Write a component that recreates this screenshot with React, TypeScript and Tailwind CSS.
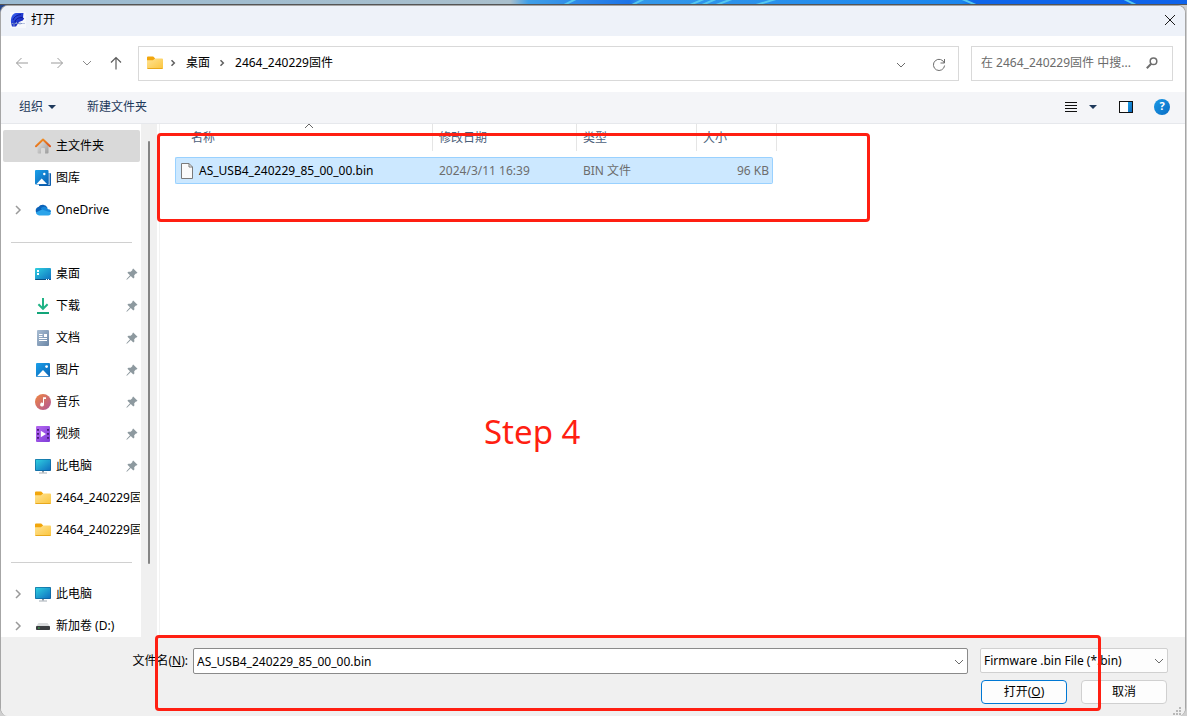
import { useState, type ReactNode } from "react";

type IconName =
  | "home"
  | "gallery"
  | "onedrive"
  | "desktop"
  | "download"
  | "document"
  | "picture"
  | "music"
  | "video"
  | "computer"
  | "folder"
  | "drive";

interface NavItem {
  label: string;
  icon: IconName;
  pinned?: boolean;
  expandable?: boolean;
  selected?: boolean;
}

const navGroups: NavItem[][] = [
  [
    { label: "主文件夹", icon: "home", selected: true },
    { label: "图库", icon: "gallery" },
    { label: "OneDrive", icon: "onedrive", expandable: true },
  ],
  [
    { label: "桌面", icon: "desktop", pinned: true },
    { label: "下载", icon: "download", pinned: true },
    { label: "文档", icon: "document", pinned: true },
    { label: "图片", icon: "picture", pinned: true },
    { label: "音乐", icon: "music", pinned: true },
    { label: "视频", icon: "video", pinned: true },
    { label: "此电脑", icon: "computer", pinned: true },
    { label: "2464_240229固件", icon: "folder" },
    { label: "2464_240229固件", icon: "folder" },
  ],
  [
    { label: "此电脑", icon: "computer", expandable: true },
    { label: "新加卷 (D:)", icon: "drive", expandable: true },
  ],
];

const iconShapes: Record<IconName, ReactNode> = {
  home: (
    <>
      <path d="M2.5 7 8 2.500 13.500 7v7.500a1 1 0 0 1-1 1H10V11a1 1 0 0 0-1-1H7a1 1 0 0 0-1 1v4.500H3.500a1 1 0 0 1-1-1z" fill="url(#gHouse)" />
      <path d="M1 8.200 8 1.600l7 6.600" fill="none" stroke="url(#gRoof)" strokeWidth="2" strokeLinecap="round" strokeLinejoin="round" />
    </>
  ),
  gallery: (
    <>
      <path d="M3 3h12a1 1 0 0 1 1 1v11a1 1 0 0 1-1 1H4z" fill="#0f5fae" />
      <path d="M14 1.5V15" stroke="#fff" strokeWidth="1" />
      <rect x="0" y="0" width="13.5" height="14.5" rx="1" fill="url(#gBlue)" />
      <path d="M1.5 14 6.700 8.500 12 14z" fill="#fff" />
      <circle cx="9.300" cy="4" r="1.200" fill="#fff" />
    </>
  ),
  onedrive: (
    <>
      <path d="M4 12.5a3.8 3.8 0 0 1-.6-7.4A5.2 5.2 0 0 1 12.6 6L8 10z" fill="#0b62b8" />
      <path d="M5.8 6.2A4.3 4.3 0 0 1 13 7.2a2.8 2.8 0 0 1 3 2.8l-6 1.6z" fill="#1686d9" />
      <path d="M.8 10.6 7 7.4l8.9 3a2.8 2.8 0 0 1-2.7 3H4a4 4 0 0 1-3.2-2.8z" fill="#2ba4ea" />
    </>
  ),
  desktop: (
    <>
      <rect x="0" y="2" width="16" height="12" rx="1" fill="url(#gTeal)" />
      <path d="M0 13h16a1 1 0 0 1-1 1H1a1 1 0 0 1-1-1z" fill="#0b4f84" />
      <path d="M2 4h2v2H2zM2 7h2v2H2z" fill="#fff" />
      <path d="M11 13.500h1M13 13.500h1" stroke="#fff" strokeWidth="1" />
    </>
  ),
  download: (
    <>
      <path d="M8 0v10.500M3.400 6.300 8 10.800l4.600-4.500" fill="none" stroke="#1fb385" strokeWidth="2" />
      <path d="M2 15h12" stroke="#12a579" strokeWidth="2" />
    </>
  ),
  document: (
    <>
      <rect x="2" y="0" width="12" height="16" rx="1" fill="url(#gDoc)" />
      <path d="M4 4.5h3.5M4 6.5h3.5M4 8.500h8M4 10.500h8" stroke="#fff" strokeWidth="1" />
      <path d="M9 4h3v3H9z" fill="#fff" />
    </>
  ),
  picture: (
    <>
      <rect x="1" y="1" width="14" height="14" rx="1" fill="url(#gBlue)" />
      <path d="M2 14.3 8 8l6 6.3z" fill="#fff" />
      <circle cx="11.6" cy="4.6" r="1.4" fill="#fff" />
    </>
  ),
  music: (
    <>
      <circle cx="8" cy="8" r="8" fill="url(#gMusic)" />
      <path d="M8 3.2h3v1.9H9v5.4a1.9 1.9 0 1 1-1-1.6z" fill="#fff" />
    </>
  ),
  video: (
    <>
      <rect x="1" y="0" width="14" height="16" rx="1" fill="url(#gVideo)" />
      <path d="M2 3h2v1.8H2zM2 7h2v1.8H2zM2 11h2v1.8H2zM12 3h2v1.8h-2zM12 7h2v1.8h-2zM12 11h2v1.8h-2z" fill="#4a1c7a" />
      <path d="M5.8 4.8 11 8l-5.2 3.2z" fill="#fff" />
    </>
  ),
  computer: (
    <>
      <path d="M7 13h2v1.5H7z" fill="#8996a0" />
      <path d="M4 14.5h8v1H4z" fill="#a4adb4" />
      <rect x="0" y="1" width="16" height="12" rx="1" fill="#0b5a94" />
      <rect x="0.6" y="1.6" width="14.8" height="10.8" fill="url(#gTeal)" />
    </>
  ),
  folder: (
    <>
      <path d="M0 2.500a1 1 0 0 1 1-1h5.200L8 3.300v1L6 6H0z" fill="#f2a60c" />
      <path d="M0 5.200h6L8 3.500h7a1 1 0 0 1 1 1V13a1 1 0 0 1-1 1H1a1 1 0 0 1-1-1z" fill="url(#gFolder)" />
      <path d="M.5 13.500h15" stroke="#e8a81c" strokeWidth="1" />
    </>
  ),
  drive: (
    <>
      <path d="M3.5 5h9L15 8.5H1z" fill="#d9dbdd" />
      <rect x="1" y="8" width="14" height="4" rx="0.8" fill="#3a3d40" />
      <path d="M3.2 9.4h1.4v1.2H3.2z" fill="#3ddc55" />
    </>
  ),
};

function Icon({ name }: { name: IconName }) {
  return (
    <svg className="size-4 shrink-0" viewBox="0 0 16 16" aria-hidden="true">
      {iconShapes[name]}
    </svg>
  );
}

// Shared gradients for the file icons
function IconDefs() {
  const gradients = [
    ["gHouse", "#e6e6e6", "#9b9b9b"],
    ["gRoof", "#f59a23", "#d9541e"],
    ["gBlue", "#1aa0ea", "#0b62b4"],
    ["gTeal", "#2fd0e0", "#0f6fc0"],
    ["gDoc", "#a9bdd3", "#6a86a6"],
    ["gMusic", "#f0873f", "#b0559b"],
    ["gVideo", "#b568f0", "#7e3bd8"],
    ["gFolder", "#ffe394", "#fbc53d"],
    ["gApp", "#3a66f5", "#0a10a8"],
  ];
  return (
    <svg className="absolute size-0" aria-hidden="true">
      <defs>
        {gradients.map(([id, from, to]) => (
          <linearGradient key={id} id={id} x1="0" y1="0" x2="1" y2="1">
            <stop offset="0" stopColor={from} />
            <stop offset="1" stopColor={to} />
          </linearGradient>
        ))}
      </defs>
    </svg>
  );
}

function Chevron({ dir, className }: { dir: "up" | "down" | "right"; className: string }) {
  const d = {
    up: "M2 8 6 4l4 4",
    down: "M2 4l4 4 4-4",
    right: "M4 2l4 4-4 4",
  }[dir];
  return (
    <svg className={className} viewBox="0 0 12 12" fill="none" stroke="currentColor" aria-hidden="true">
      <path d={d} />
    </svg>
  );
}

// Small bold separator between the parts of the path
function Crumb() {
  return (
    <svg className="size-2" viewBox="0 0 8 8" fill="none" stroke="#5f5f5f" strokeWidth="1.500" aria-hidden="true">
      <path d="M2.500 1.200 5.300 4 2.500 6.800" />
    </svg>
  );
}

function Pin() {
  return (
    <svg className="size-3 shrink-0" viewBox="0 0 12 12" aria-hidden="true">
      <path d="M7.200.5 11.500 4.800l-1 .8-.6-.1-1.700 1.800.2 2.200-1.100 1L4.800 8 1.200 11.600l-.8.2.2-.8L4 7.200 1.400 4.800l1-1.100 2.300.1 1.800-1.800-.1-.7z" fill="#8d999f" />
    </svg>
  );
}

function Wallpaper() {
  return (
    <svg className="h-1 w-full shrink-0" viewBox="0 0 1187 4" preserveAspectRatio="none" aria-hidden="true">
      <defs>
        <linearGradient id="wall" x1="0" x2="1" y1="0" y2="0">
          <stop offset="0" stopColor="#9abbd2" />
          <stop offset="0.43" stopColor="#a9bfcc" />
          <stop offset="0.445" stopColor="#3f9fe8" />
          <stop offset="0.53" stopColor="#1d74e8" />
          <stop offset="0.54" stopColor="#3398ea" />
          <stop offset="0.81" stopColor="#1b86ee" />
          <stop offset="0.82" stopColor="#0f66ea" />
          <stop offset="1" stopColor="#0f63ea" />
        </linearGradient>
      </defs>
      <rect width="1187" height="4" fill="url(#wall)" />
      <path
        d="M564 5l12-6M632 5l12-6M690 5l14-6M702 5l14-6M716 5l16-6M756 5l20-6M962-1l14 6M1124-1l12 6"
        stroke="#55c8f0"
        strokeWidth="2"
      />
    </svg>
  );
}

function TitleBar() {
  return (
    <div className="flex h-[30px] shrink-0 items-center bg-[#eef2f9] pr-[7px] pb-0.5 pl-[9px]">
      <svg className="size-4" viewBox="0 0 16 16" aria-hidden="true">
        <rect width="16" height="16" fill="#f6f8fc" />
        <path d="M1 11C.5 5 2.500 1.500 6 1h7.500L13 5.500l1.200 1-1.500 2L9 10l-3 4.500H2z" fill="url(#gApp)" />
        <path d="M3 8c1-3 3.500-5 8-5.500M5 10c.6-2.800 3-4.500 7.500-4.500" fill="none" stroke="#0a0f86" strokeWidth="0.8" />
        <path d="M1.500 11.500h13M3 13h2M6.500 10v3M10 10.500v2" stroke="#7f93c8" strokeWidth="1" strokeDasharray="2 1" />
      </svg>
      <h1 className="ml-[5px] flex-1 text-xs text-black">打开</h1>
      <button aria-label="关闭" className="flex size-4 items-center justify-center">
        <svg className="size-3" viewBox="0 0 12 12" stroke="#1a1a1a" aria-hidden="true">
          <path d="M1 1l10 10M11 1 1 11" />
        </svg>
      </button>
    </div>
  );
}

function NavBar() {
  return (
    <div className="flex h-14 shrink-0 items-center bg-white pr-3 pb-0.5 pl-[14px]">
      <div className="flex w-[123px] items-center">
        <button aria-label="后退" className="text-[#9b9b9b]">
          <svg className="size-[14px]" viewBox="0 0 14 14" fill="none" stroke="currentColor" aria-hidden="true">
            <path d="M13 7H1.500M6.500 2l-5 5 5 5" />
          </svg>
        </button>
        <button aria-label="前进" className="ml-[21px] text-[#9b9b9b]">
          <svg className="size-[14px]" viewBox="0 0 14 14" fill="none" stroke="currentColor" aria-hidden="true">
            <path d="M1 7h11.500M7.500 2l5 5-5 5" />
          </svg>
        </button>
        <button aria-label="最近浏览的位置" className="ml-[17px] text-[#8a8a8a]">
          <Chevron dir="down" className="size-3" />
        </button>
        <button aria-label="上移" className="ml-4 text-[#5c5c5c]">
          <svg className="size-[14px]" viewBox="0 0 14 14" fill="none" stroke="currentColor" strokeWidth="1.2" aria-hidden="true">
            <path d="M7 13.500V1.500M2 6.500l5-5 5 5" />
          </svg>
        </button>
      </div>

      <div className="flex h-[35px] min-w-0 flex-1 items-center border border-[#d9d9d9] px-2 text-xs text-black">
        <Icon name="folder" />
        <span className="ml-[6px]">
          <Crumb />
        </span>
        <a href="#desktop" className="ml-[9px]">桌面</a>
        <span className="ml-2">
          <Crumb />
        </span>
        <a href="#firmware" className="ml-[9px] flex-1">2464_240229固件</a>
        <button aria-label="以前的位置" className="mr-[25px] pt-1 text-[#6b6b6b]">
          <Chevron dir="down" className="size-3" />
        </button>
        <button aria-label="刷新" className="mr-1 pt-1">
          <svg className="size-[14px]" viewBox="0 0 14 14" fill="none" stroke="#6e6e6e" aria-hidden="true">
            <path d="M12.300 5A5.600 5.600 0 1 0 12.600 7.500M12.500 1v4H8.500" />
          </svg>
        </button>
      </div>

      <label className="ml-3 flex h-[35px] w-[202px] items-center border border-[#d9d9d9] pr-[14px] pl-[9px]">
        <input
          aria-label="搜索"
          placeholder="在 2464_240229固件 中搜..."
          className="min-w-0 flex-1 text-xs text-black outline-none placeholder:text-[#6b6b6b]"
        />
        <svg className="size-3" viewBox="0 0 12 12" fill="none" stroke="#6e6e6e" aria-hidden="true">
          <circle cx="7.500" cy="4.300" r="3.300" strokeWidth="1.500" />
          <path d="M5.200 6.800.8 11.200" strokeWidth="2" />
        </svg>
      </label>
    </div>
  );
}

function Caret() {
  return (
    <svg className="h-1 w-2" viewBox="0 0 8 4" aria-hidden="true">
      <path d="M0 0h8L4 4z" fill="#1e395b" />
    </svg>
  );
}

function Toolbar() {
  return (
    <div className="flex h-8 shrink-0 items-center border-b border-[#e6e8ec] bg-[#f4f5f8] pr-[15px] pb-0.5 pl-[18px] text-xs text-[#1e395b]">
      <button className="flex items-center gap-[5px]">
        组织
        <Caret />
      </button>
      <button className="ml-[31px]">新建文件夹</button>
      <div className="ml-auto flex items-center">
        <button aria-label="更改视图" className="flex items-center gap-3">
          <svg className="size-3" viewBox="0 0 12 12" stroke="#111" aria-hidden="true">
            <path d="M0 1.500h12M0 4.500h12M0 7.500h12M0 10.500h12" />
          </svg>
          <Caret />
        </button>
        <button aria-label="预览窗格" className="ml-[22px]">
          <svg className="h-3 w-[14px]" viewBox="0 0 14 12" aria-hidden="true">
            <rect x="0.5" y="0.5" width="13" height="11" fill="#fff" stroke="#111" />
            <path d="M9 1h4v10H9z" fill="url(#gBlue)" />
          </svg>
        </button>
        <button
          aria-label="帮助"
          className="ml-[21px] flex size-4 items-center justify-center rounded-full bg-linear-to-br from-[#1c9ae6] to-[#0a6cc4] text-[11px] font-bold text-white"
        >
          ?
        </button>
      </div>
    </div>
  );
}

function NavRow({ item }: { item: NavItem }) {
  return (
    <li>
      <a
        href={`#${item.icon}`}
        className={
          item.selected
            ? "mr-px ml-0.5 flex h-8 items-center rounded-xs bg-[#d9d9d9] pl-[9px]"
            : "mr-px ml-0.5 flex h-8 items-center overflow-hidden pl-[9px]"
        }
      >
        <span className="w-[23px] shrink-0">
          {item.expandable && <Chevron dir="right" className="size-3 stroke-[1.5] text-[#9a9a9a]" />}
        </span>
        <Icon name={item.icon} />
        <span className="ml-[5px] flex-1 overflow-hidden whitespace-nowrap">{item.label}</span>
        {item.pinned && (
          <span className="mr-0.5">
            <Pin />
          </span>
        )}
      </a>
    </li>
  );
}

function Sidebar() {
  return (
    <nav className="flex w-[156px] shrink-0 bg-[#f0f0f0] text-xs text-black">
      <div className="w-[140px] overflow-hidden bg-white pt-[6px]">
        {navGroups.map((group, i) => (
          <div key={i}>
            {i > 0 && (
              <div className="flex h-8 items-center pr-[9px] pl-[10px]">
                <hr className="w-full border-[#d0d0d0]" />
              </div>
            )}
            <ul>
              {group.map((item, j) => (
                <NavRow key={j} item={item} />
              ))}
            </ul>
          </div>
        ))}
      </div>
      <div className="mt-[17px] ml-[7px] h-[423px] w-0.5 rounded-full bg-[#858585]" />
    </nav>
  );
}

function FileList() {
  const headCell = "h-[27px] border-r border-[#e5e5e5] pl-[6px] text-left font-normal";
  const rowCell = "flex h-[27px] items-center border-y border-[#99d1ff] bg-[#cce8ff]";
  return (
    <main className="min-w-0 flex-1 overflow-hidden bg-white">
      <div className="ml-0.5 h-full border-l border-[#f2f2f2] pl-[15px]">
        <table className="w-[602px] table-fixed border-separate border-spacing-0 text-xs">
          <colgroup>
            <col className="w-[258px]" />
            <col className="w-36" />
            <col className="w-[120px]" />
            <col className="w-20" />
          </colgroup>
          <thead className="text-[#4c607a]">
            <tr>
              <th className="relative h-[27px] border-r border-[#e5e5e5] pl-4 text-left font-normal">
                名称
                <Chevron dir="up" className="absolute -top-1 left-32 size-3 text-[#666]" />
              </th>
              <th className={headCell}>修改日期</th>
              <th className={headCell}>类型</th>
              <th className={headCell}>大小</th>
            </tr>
          </thead>
          <tbody className="text-[#6d6d6d]">
            <tr>
              <td className="pt-[6px]">
                <div className="flex h-[27px] items-center rounded-l-xs border-y border-l border-[#99d1ff] bg-[#cce8ff] pl-[5px] text-black">
                  <svg className="h-4 w-3" viewBox="0 0 12 16" aria-hidden="true">
                    <path d="M.5.5h7.500l3.500 3.500v11.500H.5z" fill="#fafafa" stroke="#7a7a7a" />
                    <path d="M8 .5V4h3.500" fill="none" stroke="#7a7a7a" />
                  </svg>
                  <span className="ml-[6px]">AS_USB4_240229_85_00_00.bin</span>
                </div>
              </td>
              <td className="pt-[6px]">
                <div className={`${rowCell} pl-[6px]`}>2024/3/11 16:39</div>
              </td>
              <td className="pt-[6px]">
                <div className={`${rowCell} pl-[6px]`}>BIN 文件</div>
              </td>
              <td className="pt-[6px] pr-1">
                <div className="flex h-[27px] items-center justify-end rounded-r-xs border-y border-r border-[#99d1ff] bg-[#cce8ff] pr-[3px]">
                  96 KB
                </div>
              </td>
            </tr>
          </tbody>
        </table>
      </div>
    </main>
  );
}

function Footer() {
  const [fileName, setFileName] = useState("AS_USB4_240229_85_00_00.bin");

  return (
    <div className="flex h-[79px] shrink-0 flex-col gap-[6px] bg-[#f0f0f0] pt-[11px] pr-[17px] text-xs text-black">
      <div className="flex items-start">
        <label htmlFor="file-name" className="w-[187px] text-right leading-[26px]">
          文件名(<u>N</u>):
        </label>
        <div className="ml-[5px] flex h-[26px] min-w-0 flex-1 items-center rounded-xs border border-[#8a8a8a] bg-white pt-0.5 pr-0.5 pl-[3px]">
          <input
            id="file-name"
            value={fileName}
            onChange={(e) => setFileName(e.target.value)}
            className="min-w-0 flex-1 outline-none"
          />
          <button aria-label="以前的文件名" className="text-[#6b6b6b]">
            <Chevron dir="down" className="size-3" />
          </button>
        </div>
        <div className="relative ml-3 h-[25px] w-[188px]">
          <select
            aria-label="文件类型"
            className="size-full appearance-none rounded-xs border border-[#d0d0d0] bg-[#fdfdfd] pl-[3px]"
          >
            <option>Firmware .bin File (*.bin)</option>
          </select>
          <Chevron dir="down" className="pointer-events-none absolute top-[7px] right-[3px] size-3 text-[#6b6b6b]" />
        </div>
      </div>
      <div className="flex justify-end gap-[14px] pr-px">
        <button className="h-6 w-[86px] rounded-sm border border-[#0078d4] bg-[#fdfdfd]">
          打开(<u>O</u>)
        </button>
        <button className="h-6 w-[86px] rounded-sm border border-[#d0d0d0] bg-[#fdfdfd]">取消</button>
      </div>
    </div>
  );
}

// Dotted resize handle in the window corner
function ResizeGrip() {
  return (
    <svg className="absolute right-[3px] bottom-0 size-[9px]" viewBox="0 0 9 9" fill="#b8b8b8" aria-hidden="true">
      <path d="M6 0h2v2H6zM3 3h2v2H3zM6 3h2v2H6zM0 6h2v2H0zM3 6h2v2H3zM6 6h2v2H6z" />
    </svg>
  );
}

export default function App() {
  return (
    <div className="relative flex h-screen flex-col overflow-hidden bg-[#cfcfcf] font-['Noto_Sans','Noto_Sans_CJK_SC',sans-serif]">
      <IconDefs />
      <Wallpaper />
      <div className="flex min-h-0 flex-1 flex-col border-t border-[#555] bg-[linear-gradient(#24468c,#24468c)] bg-[size:8px_36px] bg-no-repeat pr-px">
        <div className="relative flex min-h-0 flex-1 flex-col overflow-hidden rounded-lg border-t border-r border-l border-[#a6a6a6] bg-white">
          <TitleBar />
          <NavBar />
          <Toolbar />
          <div className="flex min-h-0 flex-1">
            <Sidebar />
            <FileList />
          </div>
          <Footer />
          <ResizeGrip />
        </div>
      </div>

      {/* Red markup over the dialog */}
      <div className="pointer-events-none absolute top-[133px] left-[157px] h-[89px] w-[713px] rounded-sm border-3 border-[#ff1f12]" />
      <div className="pointer-events-none absolute right-[86px] bottom-[5px] left-[155px] h-[76px] rounded-sm border-3 border-[#ff1f12]" />
      <p className="pointer-events-none absolute top-[412px] left-[484px] text-[33px] leading-10 text-[#ff1f12]">Step 4</p>
    </div>
  );
}
